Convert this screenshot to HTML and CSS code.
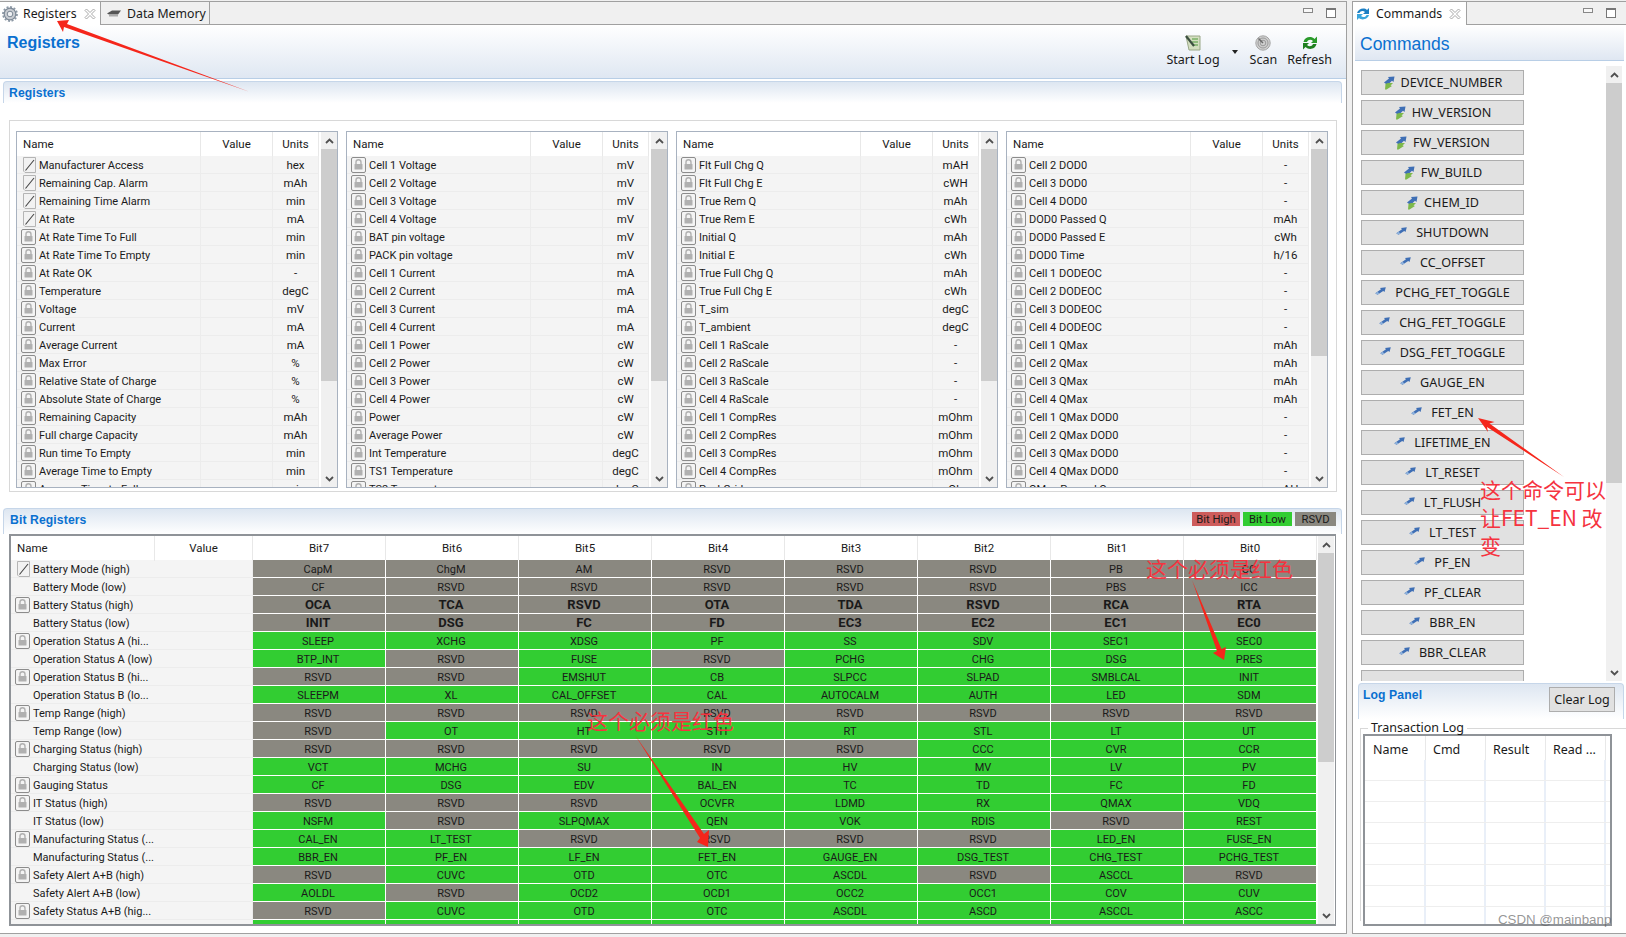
FILE: index.html
```html
<!DOCTYPE html>
<html lang="en">
<head>
<meta charset="utf-8">
<title>Registers</title>
<link rel="stylesheet" href="styles.css">
</head>
<body>
<svg class="defs" width="0" height="0">
  <symbol id="lock" viewBox="0 0 15 16"><rect x=".5" y=".5" width="14" height="15" rx="1.5" fill="#f4f4f4" stroke="#8c8c8c"/><path d="M5 7V5.200a2.500 2.500 0 0 1 5 0V7" fill="none" stroke="#b0b0b0" stroke-width="1.400"/><rect x="3.500" y="7" width="8" height="5.500" rx=".5" fill="#b0b0b0"/></symbol>
  <symbol id="pen" viewBox="0 0 13 16"><path d="M.5.5H12.500V15.500H2L.5 14Z" fill="#f2f2f2" stroke="#b5b5b5"/><path d="M2.500 13.500 11 3" stroke="#444" stroke-width="1.100"/></symbol>
  <symbol id="cmd2" viewBox="0 0 12 14"><path d="M1 6.500 6 2.500 5 1 11.500.5 10.500 6 9 4.800 4.500 9Z" fill="#3f6fb5"/><path d="M2 13.500 2.500 8 1 8.500 5 7 10 7 7.500 9.500 9 10 3.500 13.500Z" fill="#7db84a"/></symbol>
  <symbol id="cmd1" viewBox="0 0 11 8"><path d="M.3 6.200 6 2.300 5 1 10.800.3 9.500 5 8.200 3.900 2.500 7.800Z" fill="#3f6fb5"/><path d="M.3 6.200 2.500 7.800 4.500 6.400 2.500 4.700Z" fill="#8fb2dc"/></symbol>
  <symbol id="chev-up" viewBox="0 0 9 6"><path d="M1 5 4.500 1.500 8 5" fill="none" stroke="#505050" stroke-width="1.800"/></symbol>
  <symbol id="chev-down" viewBox="0 0 9 6"><path d="M1 1 4.500 4.500 8 1" fill="none" stroke="#505050" stroke-width="1.800"/></symbol>
  <symbol id="tab-close" viewBox="0 0 12 12"><path d="M1 2.500 2.500 1 6 4.500 9.500 1 11 2.500 7.500 6 11 9.500 9.500 11 6 7.500 2.500 11 1 9.500 4.500 6Z" fill="#fff" stroke="#a8a8a8"/></symbol>
</svg>

<div class="workbench">
  <section class="pane pane-left">
    <div class="tabbar">
      <div class="tab tab-active">
        <svg class="tab-ic" viewBox="0 0 16 16"><circle cx="8" cy="8" r="5.800" fill="#c8ccd2" stroke="#7b8794" stroke-width="1.200"/><circle cx="8" cy="8" r="6.900" fill="none" stroke="#8b97a4" stroke-width="2" stroke-dasharray="2 1.600"/><circle cx="8" cy="8" r="2.800" fill="#eef0f3" stroke="#7b8794"/></svg>
        <span class="tab-label">Registers</span>
        <svg class="tab-x"><use href="#tab-close"/></svg>
      </div>
      <div class="tab tab-idle">
        <svg class="tab-ic chip" viewBox="0 0 16 10"><path d="M1 5 6 2H15L12 6H3Z" fill="#555"/><path d="M3 6H12V8H3Z" fill="#aaa"/></svg>
        <span class="tab-label">Data Memory</span>
      </div>
      <div class="win-btns">
        <span class="win-min"></span><span class="win-max"></span>
      </div>
    </div>
    <div class="pane-body">
      <header class="form-head">
        <h1 class="form-title">Registers</h1>
        <div class="toolbar">
          <div class="tool tool-log">
            <svg class="tool-ic" viewBox="0 0 16 16"><path d="M1 1H15V15H4Z" fill="#d4dfc0" stroke="#9aa888"/><path d="M7 4H13M7 7H13M8 10H13" stroke="#4d9a3a" stroke-width="1.200"/><path d="M1 1 9 11" stroke="#3c5040" stroke-width="2.200"/></svg>
            <span>Start Log</span>
          </div>
          <span class="tool-drop"></span>
          <div class="tool tool-scan">
            <svg class="tool-ic" viewBox="0 0 16 16"><circle cx="8" cy="8" r="7.200" fill="#cfcfcf" stroke="#a5a5a5"/><circle cx="8" cy="8" r="5" fill="none" stroke="#9a9a9a"/><circle cx="8" cy="8" r="2.800" fill="none" stroke="#9a9a9a"/><path d="M8 8 3.500 3.500" stroke="#6a6a6a" stroke-width="1.500"/></svg>
            <span>Scan</span>
          </div>
          <div class="tool tool-refresh">
            <svg class="tool-ic" viewBox="0 0 16 16"><path d="M1.500 7C2.500 2 9 .5 12.500 4L15 1.500V8H9L11 6C9 4 6 4.500 5 7Z" fill="#2a9a2a"/><path d="M14.500 9C13.500 14 7 15.500 3.500 12L1 14.500V8H7L5 10C7 12 10 11.500 11 9Z" fill="#1f7f1f"/></svg>
            <span>Refresh</span>
          </div>
        </div>
      </header>

      <div class="sec sec-reg">
        <div class="sec-head"><h2 class="sec-title">Registers</h2></div>
        <div class="reg-box">

          <div class="reg-table">
            <div class="reg-main">
              <div class="reg-hd"><span class="hn">Name</span><span>Value</span><span>Units</span></div>
              <div class="r"><span class="n"><svg class="pen"><use href="#pen"/></svg>Manufacturer Access</span><span></span><span class="u">hex</span></div>
              <div class="r"><span class="n"><svg class="pen"><use href="#pen"/></svg>Remaining Cap. Alarm</span><span></span><span class="u">mAh</span></div>
              <div class="r"><span class="n"><svg class="pen"><use href="#pen"/></svg>Remaining Time Alarm</span><span></span><span class="u">min</span></div>
              <div class="r"><span class="n"><svg class="pen"><use href="#pen"/></svg>At Rate</span><span></span><span class="u">mA</span></div>
              <div class="r"><span class="n"><svg class="lk"><use href="#lock"/></svg>At Rate Time To Full</span><span></span><span class="u">min</span></div>
              <div class="r"><span class="n"><svg class="lk"><use href="#lock"/></svg>At Rate Time To Empty</span><span></span><span class="u">min</span></div>
              <div class="r"><span class="n"><svg class="lk"><use href="#lock"/></svg>At Rate OK</span><span></span><span class="u">-</span></div>
              <div class="r"><span class="n"><svg class="lk"><use href="#lock"/></svg>Temperature</span><span></span><span class="u">degC</span></div>
              <div class="r"><span class="n"><svg class="lk"><use href="#lock"/></svg>Voltage</span><span></span><span class="u">mV</span></div>
              <div class="r"><span class="n"><svg class="lk"><use href="#lock"/></svg>Current</span><span></span><span class="u">mA</span></div>
              <div class="r"><span class="n"><svg class="lk"><use href="#lock"/></svg>Average Current</span><span></span><span class="u">mA</span></div>
              <div class="r"><span class="n"><svg class="lk"><use href="#lock"/></svg>Max Error</span><span></span><span class="u">%</span></div>
              <div class="r"><span class="n"><svg class="lk"><use href="#lock"/></svg>Relative State of Charge</span><span></span><span class="u">%</span></div>
              <div class="r"><span class="n"><svg class="lk"><use href="#lock"/></svg>Absolute State of Charge</span><span></span><span class="u">%</span></div>
              <div class="r"><span class="n"><svg class="lk"><use href="#lock"/></svg>Remaining Capacity</span><span></span><span class="u">mAh</span></div>
              <div class="r"><span class="n"><svg class="lk"><use href="#lock"/></svg>Full charge Capacity</span><span></span><span class="u">mAh</span></div>
              <div class="r"><span class="n"><svg class="lk"><use href="#lock"/></svg>Run time To Empty</span><span></span><span class="u">min</span></div>
              <div class="r"><span class="n"><svg class="lk"><use href="#lock"/></svg>Average Time to Empty</span><span></span><span class="u">min</span></div>
              <div class="r"><span class="n"><svg class="lk"><use href="#lock"/></svg>Average Time to Full</span><span></span><span class="u">min</span></div>
            </div>
            <div class="sb"><svg class="chev"><use href="#chev-up"/></svg><div class="sb-track"><div class="thumb th-232"></div></div><svg class="chev"><use href="#chev-down"/></svg></div>
          </div>

          <div class="reg-table">
            <div class="reg-main">
              <div class="reg-hd"><span class="hn">Name</span><span>Value</span><span>Units</span></div>
              <div class="r"><span class="n"><svg class="lk"><use href="#lock"/></svg>Cell 1 Voltage</span><span></span><span class="u">mV</span></div>
              <div class="r"><span class="n"><svg class="lk"><use href="#lock"/></svg>Cell 2 Voltage</span><span></span><span class="u">mV</span></div>
              <div class="r"><span class="n"><svg class="lk"><use href="#lock"/></svg>Cell 3 Voltage</span><span></span><span class="u">mV</span></div>
              <div class="r"><span class="n"><svg class="lk"><use href="#lock"/></svg>Cell 4 Voltage</span><span></span><span class="u">mV</span></div>
              <div class="r"><span class="n"><svg class="lk"><use href="#lock"/></svg>BAT pin voltage</span><span></span><span class="u">mV</span></div>
              <div class="r"><span class="n"><svg class="lk"><use href="#lock"/></svg>PACK pin voltage</span><span></span><span class="u">mV</span></div>
              <div class="r"><span class="n"><svg class="lk"><use href="#lock"/></svg>Cell 1 Current</span><span></span><span class="u">mA</span></div>
              <div class="r"><span class="n"><svg class="lk"><use href="#lock"/></svg>Cell 2 Current</span><span></span><span class="u">mA</span></div>
              <div class="r"><span class="n"><svg class="lk"><use href="#lock"/></svg>Cell 3 Current</span><span></span><span class="u">mA</span></div>
              <div class="r"><span class="n"><svg class="lk"><use href="#lock"/></svg>Cell 4 Current</span><span></span><span class="u">mA</span></div>
              <div class="r"><span class="n"><svg class="lk"><use href="#lock"/></svg>Cell 1 Power</span><span></span><span class="u">cW</span></div>
              <div class="r"><span class="n"><svg class="lk"><use href="#lock"/></svg>Cell 2 Power</span><span></span><span class="u">cW</span></div>
              <div class="r"><span class="n"><svg class="lk"><use href="#lock"/></svg>Cell 3 Power</span><span></span><span class="u">cW</span></div>
              <div class="r"><span class="n"><svg class="lk"><use href="#lock"/></svg>Cell 4 Power</span><span></span><span class="u">cW</span></div>
              <div class="r"><span class="n"><svg class="lk"><use href="#lock"/></svg>Power</span><span></span><span class="u">cW</span></div>
              <div class="r"><span class="n"><svg class="lk"><use href="#lock"/></svg>Average Power</span><span></span><span class="u">cW</span></div>
              <div class="r"><span class="n"><svg class="lk"><use href="#lock"/></svg>Int Temperature</span><span></span><span class="u">degC</span></div>
              <div class="r"><span class="n"><svg class="lk"><use href="#lock"/></svg>TS1 Temperature</span><span></span><span class="u">degC</span></div>
              <div class="r"><span class="n"><svg class="lk"><use href="#lock"/></svg>TS2 Temperature</span><span></span><span class="u">degC</span></div>
            </div>
            <div class="sb"><svg class="chev"><use href="#chev-up"/></svg><div class="sb-track"><div class="thumb th-232"></div></div><svg class="chev"><use href="#chev-down"/></svg></div>
          </div>

          <div class="reg-table">
            <div class="reg-main">
              <div class="reg-hd"><span class="hn">Name</span><span>Value</span><span>Units</span></div>
              <div class="r"><span class="n"><svg class="lk"><use href="#lock"/></svg>Flt Full Chg Q</span><span></span><span class="u">mAH</span></div>
              <div class="r"><span class="n"><svg class="lk"><use href="#lock"/></svg>Flt Full Chg E</span><span></span><span class="u">cWH</span></div>
              <div class="r"><span class="n"><svg class="lk"><use href="#lock"/></svg>True Rem Q</span><span></span><span class="u">mAh</span></div>
              <div class="r"><span class="n"><svg class="lk"><use href="#lock"/></svg>True Rem E</span><span></span><span class="u">cWh</span></div>
              <div class="r"><span class="n"><svg class="lk"><use href="#lock"/></svg>Initial Q</span><span></span><span class="u">mAh</span></div>
              <div class="r"><span class="n"><svg class="lk"><use href="#lock"/></svg>Initial E</span><span></span><span class="u">cWh</span></div>
              <div class="r"><span class="n"><svg class="lk"><use href="#lock"/></svg>True Full Chg Q</span><span></span><span class="u">mAh</span></div>
              <div class="r"><span class="n"><svg class="lk"><use href="#lock"/></svg>True Full Chg E</span><span></span><span class="u">cWh</span></div>
              <div class="r"><span class="n"><svg class="lk"><use href="#lock"/></svg>T_sim</span><span></span><span class="u">degC</span></div>
              <div class="r"><span class="n"><svg class="lk"><use href="#lock"/></svg>T_ambient</span><span></span><span class="u">degC</span></div>
              <div class="r"><span class="n"><svg class="lk"><use href="#lock"/></svg>Cell 1 RaScale</span><span></span><span class="u">-</span></div>
              <div class="r"><span class="n"><svg class="lk"><use href="#lock"/></svg>Cell 2 RaScale</span><span></span><span class="u">-</span></div>
              <div class="r"><span class="n"><svg class="lk"><use href="#lock"/></svg>Cell 3 RaScale</span><span></span><span class="u">-</span></div>
              <div class="r"><span class="n"><svg class="lk"><use href="#lock"/></svg>Cell 4 RaScale</span><span></span><span class="u">-</span></div>
              <div class="r"><span class="n"><svg class="lk"><use href="#lock"/></svg>Cell 1 CompRes</span><span></span><span class="u">mOhm</span></div>
              <div class="r"><span class="n"><svg class="lk"><use href="#lock"/></svg>Cell 2 CompRes</span><span></span><span class="u">mOhm</span></div>
              <div class="r"><span class="n"><svg class="lk"><use href="#lock"/></svg>Cell 3 CompRes</span><span></span><span class="u">mOhm</span></div>
              <div class="r"><span class="n"><svg class="lk"><use href="#lock"/></svg>Cell 4 CompRes</span><span></span><span class="u">mOhm</span></div>
              <div class="r"><span class="n"><svg class="lk"><use href="#lock"/></svg>PackGrid</span><span></span><span class="u">mOhm</span></div>
            </div>
            <div class="sb"><svg class="chev"><use href="#chev-up"/></svg><div class="sb-track"><div class="thumb th-232"></div></div><svg class="chev"><use href="#chev-down"/></svg></div>
          </div>

          <div class="reg-table">
            <div class="reg-main">
              <div class="reg-hd"><span class="hn">Name</span><span>Value</span><span>Units</span></div>
              <div class="r"><span class="n"><svg class="lk"><use href="#lock"/></svg>Cell 2 DOD0</span><span></span><span class="u">-</span></div>
              <div class="r"><span class="n"><svg class="lk"><use href="#lock"/></svg>Cell 3 DOD0</span><span></span><span class="u">-</span></div>
              <div class="r"><span class="n"><svg class="lk"><use href="#lock"/></svg>Cell 4 DOD0</span><span></span><span class="u">-</span></div>
              <div class="r"><span class="n"><svg class="lk"><use href="#lock"/></svg>DOD0 Passed Q</span><span></span><span class="u">mAh</span></div>
              <div class="r"><span class="n"><svg class="lk"><use href="#lock"/></svg>DOD0 Passed E</span><span></span><span class="u">cWh</span></div>
              <div class="r"><span class="n"><svg class="lk"><use href="#lock"/></svg>DOD0 Time</span><span></span><span class="u">h/16</span></div>
              <div class="r"><span class="n"><svg class="lk"><use href="#lock"/></svg>Cell 1 DODEOC</span><span></span><span class="u">-</span></div>
              <div class="r"><span class="n"><svg class="lk"><use href="#lock"/></svg>Cell 2 DODEOC</span><span></span><span class="u">-</span></div>
              <div class="r"><span class="n"><svg class="lk"><use href="#lock"/></svg>Cell 3 DODEOC</span><span></span><span class="u">-</span></div>
              <div class="r"><span class="n"><svg class="lk"><use href="#lock"/></svg>Cell 4 DODEOC</span><span></span><span class="u">-</span></div>
              <div class="r"><span class="n"><svg class="lk"><use href="#lock"/></svg>Cell 1 QMax</span><span></span><span class="u">mAh</span></div>
              <div class="r"><span class="n"><svg class="lk"><use href="#lock"/></svg>Cell 2 QMax</span><span></span><span class="u">mAh</span></div>
              <div class="r"><span class="n"><svg class="lk"><use href="#lock"/></svg>Cell 3 QMax</span><span></span><span class="u">mAh</span></div>
              <div class="r"><span class="n"><svg class="lk"><use href="#lock"/></svg>Cell 4 QMax</span><span></span><span class="u">mAh</span></div>
              <div class="r"><span class="n"><svg class="lk"><use href="#lock"/></svg>Cell 1 QMax DOD0</span><span></span><span class="u">-</span></div>
              <div class="r"><span class="n"><svg class="lk"><use href="#lock"/></svg>Cell 2 QMax DOD0</span><span></span><span class="u">-</span></div>
              <div class="r"><span class="n"><svg class="lk"><use href="#lock"/></svg>Cell 3 QMax DOD0</span><span></span><span class="u">-</span></div>
              <div class="r"><span class="n"><svg class="lk"><use href="#lock"/></svg>Cell 4 QMax DOD0</span><span></span><span class="u">-</span></div>
              <div class="r"><span class="n"><svg class="lk"><use href="#lock"/></svg>QMax Passed Q</span><span></span><span class="u">mAH</span></div>
            </div>
            <div class="sb"><svg class="chev"><use href="#chev-up"/></svg><div class="sb-track"><div class="thumb th-207"></div></div><svg class="chev"><use href="#chev-down"/></svg></div>
          </div>

        </div>
      </div>

      <div class="sec sec-bit">
        <div class="sec-head bit-head">
          <h2 class="sec-title">Bit Registers</h2>
          <div class="legend"><span class="lg lg-high">Bit High</span><span class="lg lg-low">Bit Low</span><span class="lg lg-rsvd">RSVD</span></div>
        </div>
        <div class="bit-table">
          <div class="bit-main">
            <div class="bit-hd"><span class="hn">Name</span><span>Value</span><span>Bit7</span><span>Bit6</span><span>Bit5</span><span>Bit4</span><span>Bit3</span><span>Bit2</span><span>Bit1</span><span>Bit0</span></div>
            <div class="br"><span class="bn"><svg class="pen"><use href="#pen"/></svg>Battery Mode (high)</span><span></span><span class="g">CapM</span><span class="g">ChgM</span><span class="g">AM</span><span class="g">RSVD</span><span class="g">RSVD</span><span class="g">RSVD</span><span class="g">PB</span><span class="g">CC</span></div>
            <div class="br"><span class="bn">Battery Mode (low)</span><span></span><span class="g">CF</span><span class="g">RSVD</span><span class="g">RSVD</span><span class="g">RSVD</span><span class="g">RSVD</span><span class="g">RSVD</span><span class="g">PBS</span><span class="g">ICC</span></div>
            <div class="br br-bold"><span class="bn"><svg class="lk"><use href="#lock"/></svg>Battery Status (high)</span><span></span><span class="g">OCA</span><span class="g">TCA</span><span class="g">RSVD</span><span class="g">OTA</span><span class="g">TDA</span><span class="g">RSVD</span><span class="g">RCA</span><span class="g">RTA</span></div>
            <div class="br br-bold"><span class="bn">Battery Status (low)</span><span></span><span class="g">INIT</span><span class="g">DSG</span><span class="g">FC</span><span class="g">FD</span><span class="g">EC3</span><span class="g">EC2</span><span class="g">EC1</span><span class="g">EC0</span></div>
            <div class="br"><span class="bn"><svg class="lk"><use href="#lock"/></svg>Operation Status A (hi...</span><span></span><span class="v">SLEEP</span><span class="v">XCHG</span><span class="v">XDSG</span><span class="v">PF</span><span class="v">SS</span><span class="v">SDV</span><span class="v">SEC1</span><span class="v">SEC0</span></div>
            <div class="br"><span class="bn">Operation Status A (low)</span><span></span><span class="v">BTP_INT</span><span class="g">RSVD</span><span class="v">FUSE</span><span class="g">RSVD</span><span class="v">PCHG</span><span class="v">CHG</span><span class="v">DSG</span><span class="v">PRES</span></div>
            <div class="br"><span class="bn"><svg class="lk"><use href="#lock"/></svg>Operation Status B (hi...</span><span></span><span class="g">RSVD</span><span class="g">RSVD</span><span class="v">EMSHUT</span><span class="v">CB</span><span class="v">SLPCC</span><span class="v">SLPAD</span><span class="v">SMBLCAL</span><span class="v">INIT</span></div>
            <div class="br"><span class="bn">Operation Status B (lo...</span><span></span><span class="v">SLEEPM</span><span class="v">XL</span><span class="v">CAL_OFFSET</span><span class="v">CAL</span><span class="v">AUTOCALM</span><span class="v">AUTH</span><span class="v">LED</span><span class="v">SDM</span></div>
            <div class="br"><span class="bn"><svg class="lk"><use href="#lock"/></svg>Temp Range (high)</span><span></span><span class="g">RSVD</span><span class="g">RSVD</span><span class="g">RSVD</span><span class="g">RSVD</span><span class="g">RSVD</span><span class="g">RSVD</span><span class="g">RSVD</span><span class="g">RSVD</span></div>
            <div class="br"><span class="bn">Temp Range (low)</span><span></span><span class="g">RSVD</span><span class="v">OT</span><span class="v">HT</span><span class="v">STH</span><span class="v">RT</span><span class="v">STL</span><span class="v">LT</span><span class="v">UT</span></div>
            <div class="br"><span class="bn"><svg class="lk"><use href="#lock"/></svg>Charging Status (high)</span><span></span><span class="g">RSVD</span><span class="g">RSVD</span><span class="g">RSVD</span><span class="g">RSVD</span><span class="g">RSVD</span><span class="v">CCC</span><span class="v">CVR</span><span class="v">CCR</span></div>
            <div class="br"><span class="bn">Charging Status (low)</span><span></span><span class="v">VCT</span><span class="v">MCHG</span><span class="v">SU</span><span class="v">IN</span><span class="v">HV</span><span class="v">MV</span><span class="v">LV</span><span class="v">PV</span></div>
            <div class="br"><span class="bn"><svg class="lk"><use href="#lock"/></svg>Gauging Status</span><span></span><span class="v">CF</span><span class="v">DSG</span><span class="v">EDV</span><span class="v">BAL_EN</span><span class="v">TC</span><span class="v">TD</span><span class="v">FC</span><span class="v">FD</span></div>
            <div class="br"><span class="bn"><svg class="lk"><use href="#lock"/></svg>IT Status (high)</span><span></span><span class="g">RSVD</span><span class="g">RSVD</span><span class="g">RSVD</span><span class="v">OCVFR</span><span class="v">LDMD</span><span class="v">RX</span><span class="v">QMAX</span><span class="v">VDQ</span></div>
            <div class="br"><span class="bn">IT Status (low)</span><span></span><span class="v">NSFM</span><span class="g">RSVD</span><span class="v">SLPQMAX</span><span class="v">QEN</span><span class="v">VOK</span><span class="v">RDIS</span><span class="g">RSVD</span><span class="v">REST</span></div>
            <div class="br"><span class="bn"><svg class="lk"><use href="#lock"/></svg>Manufacturing Status (...</span><span></span><span class="v">CAL_EN</span><span class="v">LT_TEST</span><span class="g">RSVD</span><span class="g">RSVD</span><span class="g">RSVD</span><span class="g">RSVD</span><span class="v">LED_EN</span><span class="v">FUSE_EN</span></div>
            <div class="br"><span class="bn">Manufacturing Status (...</span><span></span><span class="v">BBR_EN</span><span class="v">PF_EN</span><span class="v">LF_EN</span><span class="v">FET_EN</span><span class="v">GAUGE_EN</span><span class="v">DSG_TEST</span><span class="v">CHG_TEST</span><span class="v">PCHG_TEST</span></div>
            <div class="br"><span class="bn"><svg class="lk"><use href="#lock"/></svg>Safety Alert A+B (high)</span><span></span><span class="g">RSVD</span><span class="v">CUVC</span><span class="v">OTD</span><span class="v">OTC</span><span class="v">ASCDL</span><span class="g">RSVD</span><span class="v">ASCCL</span><span class="g">RSVD</span></div>
            <div class="br"><span class="bn">Safety Alert A+B (low)</span><span></span><span class="v">AOLDL</span><span class="g">RSVD</span><span class="v">OCD2</span><span class="v">OCD1</span><span class="v">OCC2</span><span class="v">OCC1</span><span class="v">COV</span><span class="v">CUV</span></div>
            <div class="br"><span class="bn"><svg class="lk"><use href="#lock"/></svg>Safety Status A+B (hig...</span><span></span><span class="g">RSVD</span><span class="v">CUVC</span><span class="v">OTD</span><span class="v">OTC</span><span class="v">ASCDL</span><span class="v">ASCD</span><span class="v">ASCCL</span><span class="v">ASCC</span></div>
            <div class="br"><span class="bn"></span><span></span><span class="v"></span><span class="v"></span><span class="v"></span><span class="v"></span><span class="v"></span><span class="v"></span><span class="v"></span><span class="v"></span></div>
          </div>
          <div class="sb sb-bit"><svg class="chev"><use href="#chev-up"/></svg><div class="sb-track"><div class="thumb th-bit"></div></div><svg class="chev"><use href="#chev-down"/></svg></div>
        </div>
      </div>
    </div>
  </section>

  <section class="pane pane-right">
    <div class="tabbar">
      <div class="tab tab-active tab-cmd">
        <svg class="tab-ic" viewBox="0 0 16 16"><path d="M2 7C3 3 9 1 12 4L14 2V8H8L10 6C8 4 5 5 4.500 7Z" fill="#1c7fc4"/><path d="M14 9C13 13 7 15 4 12L2 14V8H8L6 10C8 12 11 11 11.500 9Z" fill="#3aa5dc"/></svg>
        <span class="tab-label">Commands</span>
        <svg class="tab-x"><use href="#tab-close"/></svg>
      </div>
      <div class="win-btns">
        <span class="win-min"></span><span class="win-max"></span>
      </div>
    </div>
    <div class="pane-body pane-body-r">
      <header class="cmd-head"><h1 class="cmd-title">Commands</h1></header>
      <div class="cmd-area">
        <div class="cmd-list">
          <button class="cmd"><svg class="cmd-ic"><use href="#cmd2"/></svg>DEVICE_NUMBER</button>
          <button class="cmd"><svg class="cmd-ic"><use href="#cmd2"/></svg>HW_VERSION</button>
          <button class="cmd"><svg class="cmd-ic"><use href="#cmd2"/></svg>FW_VERSION</button>
          <button class="cmd"><svg class="cmd-ic"><use href="#cmd2"/></svg>FW_BUILD</button>
          <button class="cmd"><svg class="cmd-ic"><use href="#cmd2"/></svg>CHEM_ID</button>
          <button class="cmd"><svg class="cmd-i1"><use href="#cmd1"/></svg>SHUTDOWN</button>
          <button class="cmd"><svg class="cmd-i1"><use href="#cmd1"/></svg>CC_OFFSET</button>
          <button class="cmd"><svg class="cmd-i1"><use href="#cmd1"/></svg>PCHG_FET_TOGGLE</button>
          <button class="cmd"><svg class="cmd-i1"><use href="#cmd1"/></svg>CHG_FET_TOGGLE</button>
          <button class="cmd"><svg class="cmd-i1"><use href="#cmd1"/></svg>DSG_FET_TOGGLE</button>
          <button class="cmd"><svg class="cmd-i1"><use href="#cmd1"/></svg>GAUGE_EN</button>
          <button class="cmd"><svg class="cmd-i1"><use href="#cmd1"/></svg>FET_EN</button>
          <button class="cmd"><svg class="cmd-i1"><use href="#cmd1"/></svg>LIFETIME_EN</button>
          <button class="cmd"><svg class="cmd-i1"><use href="#cmd1"/></svg>LT_RESET</button>
          <button class="cmd"><svg class="cmd-i1"><use href="#cmd1"/></svg>LT_FLUSH</button>
          <button class="cmd"><svg class="cmd-i1"><use href="#cmd1"/></svg>LT_TEST</button>
          <button class="cmd"><svg class="cmd-i1"><use href="#cmd1"/></svg>PF_EN</button>
          <button class="cmd"><svg class="cmd-i1"><use href="#cmd1"/></svg>PF_CLEAR</button>
          <button class="cmd"><svg class="cmd-i1"><use href="#cmd1"/></svg>BBR_EN</button>
          <button class="cmd"><svg class="cmd-i1"><use href="#cmd1"/></svg>BBR_CLEAR</button>
          <button class="cmd"></button>
        </div>
        <div class="sb sb-cmd"><svg class="chev"><use href="#chev-up"/></svg><div class="sb-track"><div class="thumb th-cmd"></div></div><svg class="chev"><use href="#chev-down"/></svg></div>
      </div>
      <div class="log-panel">
        <div class="log-head">
          <h2 class="sec-title log-title">Log Panel</h2>
          <button class="clear-btn">Clear Log</button>
        </div>
        <fieldset class="log-group">
          <legend class="log-legend">Transaction Log</legend>
          <div class="log-table">
            <div class="log-hd"><span>Name</span><span>Cmd</span><span>Result</span><span>Read ...</span></div>
            <div class="log-r"><span></span><span></span><span></span><span></span></div>
            <div class="log-r"><span></span><span></span><span></span><span></span></div>
            <div class="log-r"><span></span><span></span><span></span><span></span></div>
            <div class="log-r"><span></span><span></span><span></span><span></span></div>
            <div class="log-r"><span></span><span></span><span></span><span></span></div>
            <div class="log-r"><span></span><span></span><span></span><span></span></div>
            <div class="log-r"><span></span><span></span><span></span><span></span></div>
            <div class="log-r"><span></span><span></span><span></span><span></span></div>
          </div>
        </fieldset>
      </div>
    </div>
  </section>
</div>

<svg class="marks" viewBox="0 0 1626 937">
  <polygon points="57,21 69,20 67,24 250,92 64,27 63,32"/>
  <polygon points="1478,418 1494.500,422 1489.500,423.500 1564,477 1487,427 1488,432"/>
  <polygon points="1224,660 1226,647 1221.500,649 1192,580 1217,651 1213,653"/>
  <polygon points="708,847 709,830 704,834 635,735 700,838 697,842"/>
</svg>
<div class="note note-a">这个必须是红色</div>
<div class="note note-b">这个必须是红色</div>
<div class="note note-c">这个命令可以让FET_EN 改变</div>
<div class="watermark">CSDN @mainbanp</div>
</body>
</html>
```
FILE: styles.css
```css
* { box-sizing: border-box; }
html, body { margin: 0; padding: 0; }
body {
  width: 1626px;
  height: 937px;
  overflow: hidden;
  position: relative;
  background: #f0f0f0;
  font-family: Roboto, "Liberation Sans", Arial, sans-serif;
  font-size: 11.5px;
  color: #1a1a1a;
}
h1, h2 { margin: 0; }
.defs { position: absolute; }

.workbench { display: flex; height: 934px; padding-top: 1px; }
.pane { display: flex; flex-direction: column; border-bottom: 1px solid #a0a0a0; }
.pane-left { width: 1347px; border-right: 1px solid #a0a0a0; }
.pane-right { width: 274px; margin-left: 5px; border-left: 1px solid #a0a0a0; flex: none; }

.tabbar {
  display: flex;
  height: 24px;
  flex: none;
  background: #f0f0f0;
  border-top: 1px solid #a0a0a0;
  border-bottom: 1px solid #a0a0a0;
  font-family: "Noto Sans", sans-serif;
  font-size: 12.3px;
}
.tab { display: flex; align-items: center; height: 23px; }
.tab-active { width: 101px; padding-left: 2px; background: #fff; border-right: 1px solid #a0a0a0; }
.tab-idle { width: 109px; padding-left: 5px; border-right: 1px solid #a0a0a0; }
.tab-cmd { width: 114px; }
.tab-ic { width: 16px; height: 16px; flex: none; margin-right: 5px; }
.tab-ic.chip { width: 16px; height: 11px; }
.tab-label { white-space: nowrap; }
.tab-x { width: 12px; height: 12px; margin-left: 7px; flex: none; }
.win-btns { margin-left: auto; display: flex; align-items: center; gap: 13px; padding-right: 10px; }
.win-min { width: 10px; height: 5px; border: 1px solid #888; margin-top: -6px; background: #f8f8f8; }
.win-max { width: 10px; height: 10px; border: 1px solid #777; border-top-width: 2px; background: #fff; }

.pane-body { flex: 1; background: #fff; overflow: hidden; }

.form-head {
  height: 54px;
  display: flex;
  justify-content: space-between;
  background: linear-gradient(#fff 0, #dfe7f2 100%);
  border-bottom: 1px solid #b8cee6;
  padding-left: 7px;
}
.form-title { font-family: "Liberation Sans", sans-serif; font-size: 16px; font-weight: bold; color: #0a70d0; padding-top: 8px; line-height: 20px; }
.toolbar { display: flex; font-family: "Noto Sans", sans-serif; font-size: 12.5px; padding-right: 14px; }
.tool { display: flex; flex-direction: column; align-items: center; padding-top: 10px; line-height: 17px; }
.tool-ic { width: 16px; height: 16px; flex: none; }
.tool-log { margin-right: 27px; }
.tool-drop { width: 0; height: 0; border: 3.500px solid transparent; border-top: 4px solid #222; border-bottom: 0; margin: 25px 12px 0 -15px; }
.tool-scan { margin-right: 10px; }

.sec { margin-left: 3px; margin-right: 4px; }
.sec-reg { margin-top: 2px; height: 427px; }
.sec-head {
  height: 22px;
  border: 1px solid #c6d6e9;
  border-bottom: 0;
  border-radius: 4px 4px 0 0;
  background: linear-gradient(#dde6f1 0, #fff 100%);
  padding: 3px 0 0 6px;
}
.sec-reg > .sec-head { padding-top: 4px; padding-left: 5px; }
.sec-title { font-family: "Liberation Sans", sans-serif; font-size: 12.2px; font-weight: bold; color: #0a70d0; line-height: 15px; letter-spacing: .1px; }
.reg-box {
  margin: 17px 5px 0 6px;
  height: 372px;
  border: 1px solid #d8d8d8;
  display: grid;
  grid-template-columns: repeat(4, 322px);
  column-gap: 8px;
  padding: 10px 0 0 6px;
}
.reg-table {
  height: 357px;
  display: flex;
  border: 1px solid #a8b2c0;
  overflow: hidden;
  background: #fff;
}
.reg-main { width: 302px; flex: none; overflow: hidden; }
.reg-hd, .r { display: grid; grid-template-columns: 184px 72px 46px; }
.reg-hd { height: 24px; align-items: center; text-align: center; }
.reg-hd span { line-height: 25px; border-right: 1px solid #e8e8e8; }
.reg-hd .hn, .bit-hd .hn { text-align: left; padding-left: 6px; }
.r { height: 18px; background: #f4f4f4; }
.r > span { height: 18px; padding-top: 1px; line-height: 16px; border-right: 1px solid #ececec; border-bottom: 1px solid #ececec; }
.r > .n { display: flex; align-items: center; padding: 2px 0 0 22px; position: relative; white-space: nowrap; font-size: 11px; }
.u { text-align: center; }
.lk, .pen { position: absolute; top: 1px; }
.lk { width: 15px; height: 16px; left: 4px; }
.pen { width: 13px; height: 16px; left: 6px; }

.sb { width: 16px; flex: none; margin-left: 2px; background: #f0f0f0; display: flex; flex-direction: column; align-items: center; }
.chev { width: 9px; height: 6px; flex: none; margin: 6px 0 5px; }
.sb-track { flex: 1; width: 100%; }
.thumb { width: 100%; background: #cdcdcd; }
.th-232 { height: 232px; }
.th-207 { height: 207px; }
.th-bit { height: 209px; }
.th-cmd { height: 400px; }

.sec-bit { height: 425px; }
.bit-head { height: 26px; display: flex; justify-content: space-between; padding-top: 3px; padding-right: 5px; }
.legend { display: flex; gap: 3px; }
.lg { height: 14px; line-height: 15px; font-size: 11.2px; text-align: center; }
.lg-high { width: 48px; background: #cd5c5c; }
.lg-low { width: 49px; background: #32cd32; }
.lg-rsvd { width: 41px; background: #8a8880; }
.bit-head .sec-title { padding-top: 1px; }
.bit-table {
  margin-left: 6px;
  width: 1327px;
  height: 392px;
  border: 2px solid #8f9398;
  border-right-width: 1px;
  display: flex;
  overflow: hidden;
}
.bit-main { width: 1306px; flex: none; overflow: hidden; }
.bit-hd, .br { display: grid; grid-template-columns: 144px 98px repeat(8, 133px); }
.bit-hd { height: 24px; line-height: 25px; text-align: center; }
.bit-hd span { border-right: 1px solid #e8e8e8; }
.br { height: 18px; text-align: center; background: #f4f4f4; }
.br > span { height: 18px; padding-top: 2px; line-height: 15px; border-bottom: 1px solid #ececec; }
.br > span:nth-child(2) { border-right: 1px solid #ececec; }
.br > .bn { position: relative; text-align: left; padding-left: 22px; white-space: nowrap; font-size: 11px; }
.bn .lk { left: 4px; }
.bn .pen { left: 6px; }
.br > .g, .br > .v { font-size: 11px; padding-right: 2px; border-right: 1px solid #fff; border-bottom: 1px solid #fff; }
.br > .g { background: #8a8880; }
.br > .v { background: #32cd32; }
.br-bold > .g { font-weight: bold; }
.br.br-bold > .g { font-size: 13px; padding-top: 1px; line-height: 16px; }
.sb-bit { margin-left: 1px; }

.pane-body-r { display: flex; flex-direction: column; }
.cmd-head { margin-left: 2px; margin-right: 2px; height: 36px; background: linear-gradient(#fff 0, #dfe7f2 100%); border-bottom: 1px solid #b8cee6; flex: none; padding-left: 5px; }
.cmd-title { font-family: "Liberation Sans", sans-serif; font-size: 17.5px; font-weight: normal; color: #0a70d0; padding-top: 9px; line-height: 20px; }
.cmd-area { display: flex; height: 615px; padding-left: 8px; flex: none; margin-top: 5px; }
.cmd-list { width: 245px; flex: none; overflow: hidden; padding-top: 4px; display: flex; flex-direction: column; align-items: flex-start; gap: 5px; }
.cmd {
  width: 163px;
  height: 25px;
  flex: none;
  background: #e1e1e1;
  border: 1px solid #adadad;
  border-radius: 0;
  padding: 0;
  font-family: "Noto Sans", sans-serif;
  font-size: 12.6px;
  color: #1a1a1a;
  display: flex;
  align-items: center;
  justify-content: center;
}
.cmd-ic { width: 12px; height: 14px; flex: none; margin-right: 6px; }
.cmd-i1 { width: 11px; height: 8px; flex: none; margin: 0 9px 4px 0; }
.sb-cmd { margin-left: 0; background: #f0f0f0; }

.log-panel { margin: 2px 0 0 5px; width: 270px; flex: 1; position: relative; }
.log-head {
  height: 36px;
  margin-right: 4px;
  border: 1px solid #c6d6e9;
  border-bottom: 0;
  border-radius: 4px 4px 0 0;
  background: linear-gradient(#dde6f1 0, #fff 100%);
  display: flex;
  justify-content: space-between;
  padding: 3px 8px 0 4px;
}
.log-title { padding-top: 1px; }
.clear-btn {
  width: 66px;
  height: 25px;
  padding: 0;
  background: #e1e1e1;
  border: 1px solid #adadad;
  font-family: "Noto Sans", sans-serif;
  font-size: 12.5px;
  color: #1a1a1a;
}
.log-group {
  margin: 1px 0 0 2px;
  padding: 0 0 0 2px;
  width: 268px;
  height: 201px;
  border: 1px solid #d8d8d8;
  border-right: 0;
  border-bottom: 0;
  min-width: 0;
}
.log-legend { padding: 0 3px; margin-left: 5px; font-family: "Noto Sans", sans-serif; font-size: 12.5px; line-height: 16px; }
.log-table { width: 249px; height: 192px; border: 2px solid #8f9398; margin-top: -2px; overflow: hidden; background: #fff; }
.log-hd, .log-r { display: grid; grid-template-columns: repeat(4, 60px); padding-left: 1px; }
.log-hd { height: 24px; font-family: "Noto Sans", sans-serif; font-size: 12.5px; }
.log-hd span { height: 24px; line-height: 27px; padding-left: 7px; border-right: 1px solid #e8e8e8; }
.log-r { height: 21px; border-bottom: 1px solid #eee; }
.log-r span { border-right: 2px solid #e9eff8; }

.marks { position: absolute; left: 0; top: 0; width: 1626px; height: 937px; pointer-events: none; }
.marks polygon { fill: #f5261b; }
.note {
  position: absolute;
  font-family: "Noto Sans CJK SC", "Liberation Sans", sans-serif;
  font-size: 21px;
  line-height: 28px;
  color: #f5333f;
  white-space: nowrap;
}
.note-a { left: 1146px; top: 554px; }
.note-b { left: 587px; top: 706px; }
.note-c { left: 1480px; top: 475px; width: 130px; white-space: normal; word-break: break-all; }
.watermark {
  position: absolute;
  left: 1498px;
  top: 912px;
  font-family: "Liberation Sans", sans-serif;
  font-size: 13.3px;
  line-height: 16px;
  color: rgba(90, 90, 90, .65);
  white-space: nowrap;
}
```
